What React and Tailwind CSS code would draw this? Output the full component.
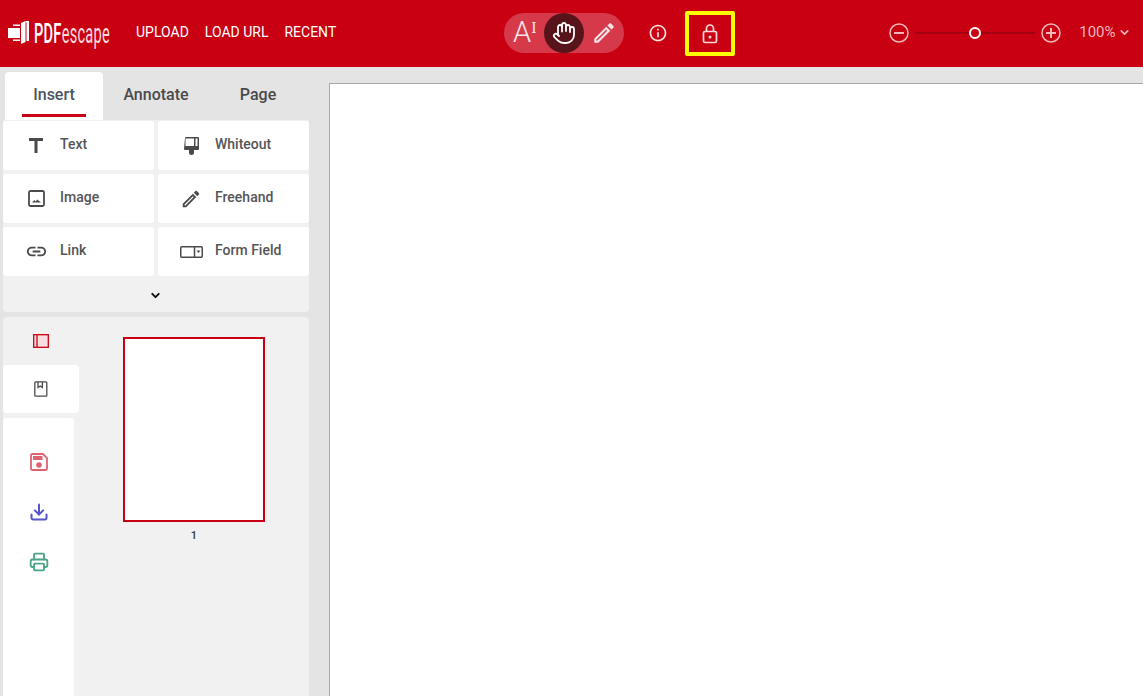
import React from 'react';
import { Hand, ChevronDown, Download, Printer } from 'lucide-react';

const Logo = () => (
    <div className="flex items-center">
        <svg width="21" height="23" viewBox="0 0 21 23" fill="#fff">
            <rect x="0" y="7" width="12" height="10" />
            <rect x="5" y="3.500" width="7" height="1.500" />
            <rect x="5" y="18.500" width="7" height="1.500" />
            <path d="M13 2 L17.500 0 L17.500 21 L13 23 Z" />
            <path d="M17.500 0 H21 V20 H18.500 V1.500 H17.500 Z" />
        </svg>
        <div className="ml-[5px] mt-[3px] w-[75px] whitespace-nowrap">
            <div className="origin-left scale-x-[.54] text-[27px] leading-none font-medium tracking-[.5px] text-white">
                PDF<span className="font-normal text-[#f7dcdf]">escape</span>
            </div>
        </div>
    </div>
);

const ToolCard = ({ icon, label }) => (
    <div className="flex h-[49px] items-start rounded-[3px] bg-white">
        <div className="flex h-[49px] w-[57px] shrink-0 items-center justify-center pl-[9px] text-[#4a4a4a]">{icon}</div>
        <span className="mt-[14px] text-sm leading-[18px] font-medium text-[#555]">{label}</span>
    </div>
);

const TextIcon = () => (
    <svg width="14" height="15" viewBox="0 0 14 15" fill="#4a4a4a">
        <path d="M0 0h14v3H8.500v12h-3V3H0z" />
    </svg>
);

const WhiteoutIcon = () => (
    <svg width="15" height="18" viewBox="0 0 15 18" fill="none">
        <path d="M1 1q0-1 1-1h12q1 0 1 1v11q0 1-1 1H1q-1 0-1-1z" fill="#4a4a4a" />
        <path d="M1.500 1.500h8.500v7.500H1.500z M11.500 1.500H13.500v7.500h-2z" fill="#fff" />
        <path d="M5 13h5v3q0 2-2.500 2T5 16z" fill="#4a4a4a" />
    </svg>
);

const ImageIcon = () => (
    <svg width="17" height="17" viewBox="0 0 17 17" fill="none">
        <rect x="1" y="1" width="15" height="15" rx="1.500" stroke="#4a4a4a" strokeWidth="1.800" />
        <path d="M4 12.500l2.200-2.500 1.500 1.500 1.600-2 3.700 3z" fill="#4a4a4a" />
    </svg>
);

const PencilIcon = ({ size, color }) => (
    <svg width={size} height={size} viewBox="0 0 24 24" fill={color}>
        <path d="M3 17.250V21h3.750L17.810 9.940l-3.750-3.750L3 17.250zM5.920 19H5v-.92l9.060-9.060.92.92L5.920 19zM20.710 7.040c.39-.39.39-1.020 0-1.410l-2.340-2.340c-.2-.2-.45-.29-.71-.29s-.51.1-.7.29l-1.830 1.830 3.750 3.750 1.830-1.830z" />
    </svg>
);

const LinkIcon = () => (
    <svg width="23" height="23" viewBox="0 0 24 24" fill="#4a4a4a">
        <path d="M3.900 12c0-1.710 1.390-3.100 3.100-3.100h4V7H7c-2.760 0-5 2.240-5 5s2.240 5 5 5h4v-1.900H7c-1.710 0-3.100-1.390-3.100-3.100zM8 13h8v-2H8v2zm9-6h-4v1.900h4c1.710 0 3.100 1.390 3.100 3.100s-1.390 3.100-3.100 3.100h-4V17h4c2.760 0 5-2.240 5-5s-2.240-5-5-5z" />
    </svg>
);

const InfoIcon = () => (
    <svg width="22" height="22" viewBox="0 0 24 24" fill="#fbe3e5">
        <path d="M11 7h2v2h-2zm0 4h2v6h-2zm1-9C6.480 2 2 6.480 2 12s4.480 10 10 10 10-4.480 10-10S17.520 2 12 2zm0 18c-4.410 0-8-3.590-8-8s3.590-8 8-8 8 3.590 8 8-3.590 8-8 8z" />
    </svg>
);

const LockIcon = () => (
    <svg width="16" height="20" viewBox="0 0 16 20" fill="none" stroke="#fbd9dc" strokeWidth="1.700">
        <rect x="1.500" y="7.500" width="13" height="11" rx="1.500" />
        <path d="M4.500 7.500V4.500a3.500 3.500 0 0 1 7 0v3" />
        <circle cx="8" cy="13" r="1.500" fill="#fbd9dc" stroke="none" />
    </svg>
);

const FormFieldIcon = () => (
    <svg width="23" height="12" viewBox="0 0 23 12" fill="none">
        <rect x=".75" y=".75" width="21.500" height="10.500" rx="1" stroke="#4a4a4a" strokeWidth="1.500" />
        <path d="M14.500 1v10" stroke="#4a4a4a" strokeWidth="1.500" />
        <path d="M16.500 4.500h4l-2 2.500z" fill="#4a4a4a" />
    </svg>
);

const App = () => {
    return (
        <div className="flex h-[696px] w-[1143px] flex-col overflow-hidden bg-[#e4e4e4] font-['Roboto',sans-serif]">
            <header className="flex h-[67px] shrink-0 items-center bg-[#c80012] text-white">
                <div className="ml-2 mb-[2px] w-[128px]"><Logo /></div>
                <nav className="mb-[3px] flex gap-4 text-sm">
                    <span>UPLOAD</span>
                    <span>LOAD URL</span>
                    <span>RECENT</span>
                </nav>
                <div className="mb-[2px] ml-[168px] flex h-10 w-[120px] items-center justify-between rounded-full bg-[#d5394a]">
                    <div className="flex w-10 items-center justify-center pl-[1px] text-[#fbe3e5]">
                        <span className="text-[29px] leading-none font-light">A</span>
                        <span className="mb-[9px] font-['Liberation_Serif',serif] text-base leading-none">I</span>
                    </div>
                    <div className="flex h-10 w-10 items-center justify-center rounded-full bg-[#57141b]">
                        <Hand size={24} strokeWidth={1.800} color="#fff" />
                    </div>
                    <div className="flex w-10 items-center justify-center">
                        <PencilIcon size={26} color="#fbe3e5" />
                    </div>
                </div>
                <div className="mb-[2px] ml-[24px] flex w-5 justify-center">
                    <InfoIcon />
                </div>
                <div className="ml-[17px] flex h-[45px] w-[50px] items-center justify-center rounded-[2px] border-[4px] border-[#ffff00]">
                    <LockIcon />
                </div>
                <div className="mb-[2px] ml-[154px] flex items-center">
                    <svg width="20" height="20" viewBox="0 0 20 20" fill="none" stroke="#f2b6bb" strokeWidth="1.500">
                        <circle cx="10" cy="10" r="9" />
                        <path d="M5 10h10" strokeWidth="2" />
                    </svg>
                    <div className="mx-[6px] flex h-[2px] w-[120px] items-center justify-center bg-[#a3000f]">
                        <div className="h-3 w-3 rounded-full border-2 border-white bg-[#c80012]" />
                    </div>
                    <svg width="20" height="20" viewBox="0 0 20 20" fill="none" stroke="#f2b6bb" strokeWidth="1.500">
                        <circle cx="10" cy="10" r="9" />
                        <path d="M5 10h10M10 5v10" strokeWidth="2" />
                    </svg>
                    <span className="ml-[18px] text-[15px] text-[#f2b6bb]">100%</span>
                    <ChevronDown size={13} strokeWidth={3} color="#f2b6bb" className="ml-[2px]" />
                </div>
            </header>

            <div className="flex min-h-0 flex-1">
                <aside className="ml-[3px] flex w-[306px] shrink-0 flex-col pt-[5px]">
                    <div className="flex h-[48px] bg-[#e4e4e4] pl-[2px]">
                        <div className="relative flex h-[48px] w-[98px] justify-center rounded-t-[4px] bg-white pt-[11px] font-medium text-[#4a5560]">
                            Insert
                            <div className="absolute bottom-[3px] left-[17px] h-[3px] w-16 bg-[#c80012]" />
                        </div>
                        <div className="flex w-[106px] justify-center pt-[11px] font-medium text-[#4a4a4a]">Annotate</div>
                        <div className="flex w-[30px] justify-center pt-[11px] pl-[49px] font-medium text-[#4a4a4a]">Page</div>
                    </div>
                    <div className="rounded-b-[4px] bg-[#f1f1f1] pt-[1px]">
                        <div className="grid grid-cols-2 gap-x-1 gap-y-1">
                            <ToolCard label="Text" icon={<TextIcon />} />
                            <ToolCard label="Whiteout" icon={<WhiteoutIcon />} />
                            <ToolCard label="Image" icon={<ImageIcon />} />
                            <ToolCard label="Freehand" icon={<PencilIcon size={22} color="#4a4a4a" />} />
                            <ToolCard label="Link" icon={<LinkIcon />} />
                            <ToolCard label="Form Field" icon={<FormFieldIcon />} />
                        </div>
                        <div className="flex h-[36px] items-center justify-center pt-[3px] pr-[1px]">
                            <ChevronDown size={13} strokeWidth={3.500} color="#111" />
                        </div>
                    </div>
                    <div className="mt-[5px] flex min-h-0 flex-1 rounded-t-[4px] bg-[#f1f1f1]">
                        <div className="flex w-[76px] shrink-0 flex-col">
                            <div className="flex h-[48px] items-center justify-center">
                                <svg width="16" height="14" viewBox="0 0 16 14" fill="#f7dfe1" stroke="#c80012" strokeWidth="1.300">
                                    <rect x=".7" y=".7" width="14.600" height="12.600" />
                                    <path d="M4 1v12" />
                                </svg>
                            </div>
                            <div className="flex h-[48px] items-center justify-center rounded-[4px] bg-white">
                                <svg width="14" height="16" viewBox="0 0 14 16" fill="none" stroke="#4a4a4a" strokeWidth="1.300">
                                    <rect x=".8" y=".8" width="12" height="14.400" rx="1" />
                                    <path d="M4 1v5.500l2.200-1.500 2.200 1.500V1" />
                                </svg>
                            </div>
                            <div className="mt-[5px] flex w-[71px] flex-1 flex-col items-center gap-[30px] rounded-t-[4px] bg-white pt-[34px]">
                                <div className="flex h-5 items-center">
                                    <svg width="18" height="18" viewBox="0 0 18 18" fill="none">
                                        <path d="M1 2.500Q1 1 2.500 1H13l4 4v10.500q0 1.500-1.500 1.500h-13Q1 17 1 15.500z" stroke="#df6272" strokeWidth="1.800" />
                                        <rect x="3" y="3" width="9.500" height="4" fill="#df6272" />
                                        <circle cx="9" cy="12" r="2.800" fill="#df6272" />
                                    </svg>
                                </div>
                                <Download size={20} strokeWidth={2.400} color="#5355c8" />
                                <Printer size={20} strokeWidth={2.200} color="#4ba585" />
                            </div>
                        </div>
                        <div className="pt-5 pl-[44px]">
                            <div className="h-[185px] w-[142px] border-2 border-[#c80012] bg-white" />
                            <div className="mt-[7px] text-center text-[11px] leading-[14px] font-medium text-[#333]">1</div>
                        </div>
                    </div>
                </aside>
                <main className="ml-5 mt-4 flex-1 border-t border-l border-[#a9a9a9] bg-white" />
            </div>
        </div>
    );
};

export default App;
